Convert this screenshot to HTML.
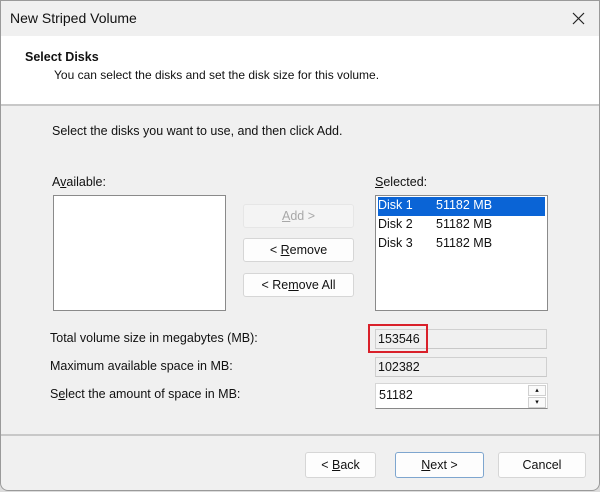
<!DOCTYPE html>
<html><head><style>
*{margin:0;padding:0;box-sizing:border-box}
body{width:600px;height:492px;background:#dcdcdc;font-family:"Liberation Sans",sans-serif;font-size:12px;color:#111;position:relative;overflow:hidden}
.win{position:absolute;left:0;top:0;width:600px;height:491px;background:#f0f0f0;box-shadow:inset 0 0 0 1px #9a9a9a;border-radius:0 0 8px 8px}
.a{position:absolute;white-space:nowrap}
.btn{position:absolute;background:#fdfdfd;border:1px solid #d6d6d6;border-radius:3px;text-align:center;font-size:12.5px}
.box{position:absolute;border:1px solid #8a8a8a;background:#fff}
.fld{position:absolute;background:#f0f0f0;border:1px solid #d0d0d0;border-bottom:1px solid #c8c8c8;padding-left:2px;font-size:12.5px;line-height:18px}
u{text-decoration:underline}
</style></head><body>
<div class="win">
<div class="a" style="left:10px;top:10px;font-size:14px">New Striped Volume</div>
<svg class="a" style="left:572px;top:12px" width="13" height="13"><path d="M1 1L12 12M12 1L1 12" stroke="#222" stroke-width="1.2"/></svg>
<div class="a" style="left:1px;top:36px;width:598px;height:70px;background:#fff;border-bottom:2px solid #c8c8c8"></div>
<div class="a" style="left:25px;top:50px;font-weight:bold;font-size:12.5px">Select Disks</div>
<div class="a" style="left:54px;top:68px;font-size:12px">You can select the disks and set the disk size for this volume.</div>
<div class="a" style="left:52px;top:124px;font-size:12.5px">Select the disks you want to use, and then click Add.</div>
<div class="a" style="left:52px;top:175px;font-size:12.5px">A<u>v</u>ailable:</div>
<div class="box" style="left:53px;top:195px;width:173px;height:116px"></div>
<div class="btn" style="left:243px;top:204px;width:111px;height:24px;line-height:22px;color:#a8a8a8;background:#f4f4f4;border-color:#e6e6e6"><u>A</u>dd &gt;</div>
<div class="btn" style="left:243px;top:238px;width:111px;height:24px;line-height:22px">&lt; <u>R</u>emove</div>
<div class="btn" style="left:243px;top:273px;width:111px;height:24px;line-height:22px">&lt; Re<u>m</u>ove All</div>
<div class="a" style="left:375px;top:175px;font-size:12.5px"><u>S</u>elected:</div>
<div class="box" style="left:375px;top:195px;width:173px;height:116px"></div>
<div class="a" style="left:378px;top:197px;width:167px;height:19px;background:#0a64d6"></div>
<div class="a" style="left:378px;top:198px;font-size:12.5px;color:#fff">Disk 1</div><div class="a" style="left:436px;top:198px;font-size:12.5px;color:#fff">51182 MB</div>
<div class="a" style="left:378px;top:217px;font-size:12.5px">Disk 2</div><div class="a" style="left:436px;top:217px;font-size:12.5px">51182 MB</div>
<div class="a" style="left:378px;top:236px;font-size:12.5px">Disk 3</div><div class="a" style="left:436px;top:236px;font-size:12.5px">51182 MB</div>
<div class="a" style="left:50px;top:331px;font-size:12.5px">Total volume size in megabytes (MB):</div>
<div class="a" style="left:50px;top:359px;font-size:12.5px">Maximum available space in MB:</div>
<div class="a" style="left:50px;top:387px;font-size:12.5px">S<u>e</u>lect the amount of space in MB:</div>
<div class="fld" style="left:375px;top:329px;width:172px;height:20px">153546</div>
<div class="fld" style="left:375px;top:357px;width:172px;height:20px">102382</div>
<div class="a" style="left:368px;top:324px;width:60px;height:29px;border:2px solid #d9202a"></div>
<div class="box" style="left:375px;top:383px;width:173px;height:26px;border-color:#d6d6d6;border-bottom-color:#888"></div>
<div class="a" style="left:379px;top:388px;font-size:12.5px">51182</div>
<div class="a" style="left:528px;top:385px;width:18px;height:11px;border:1px solid #d0d0d0;background:#fafafa;font-size:7px;text-align:center;line-height:9px">▴</div>
<div class="a" style="left:528px;top:397px;width:18px;height:11px;border:1px solid #d0d0d0;background:#fafafa;font-size:7px;text-align:center;line-height:9px">▾</div>
<div class="a" style="left:1px;top:434px;width:598px;height:2px;background:#c8c8c8"></div>
<div class="btn" style="left:305px;top:452px;width:71px;height:26px;line-height:24px">&lt; <u>B</u>ack</div>
<div class="btn" style="left:395px;top:452px;width:89px;height:26px;line-height:24px;border-color:#7ea6cf"><u>N</u>ext &gt;</div>
<div class="btn" style="left:498px;top:452px;width:88px;height:26px;line-height:24px">Cancel</div>
</div>
</body></html>
